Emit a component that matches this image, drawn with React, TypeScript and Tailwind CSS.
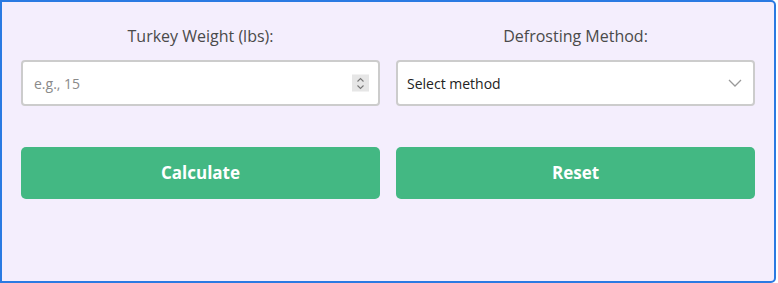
import { useState } from "react";

const font = { fontFamily: '"Open Sans", "Noto Sans", Arial, sans-serif' };

function Spinner() {
  return (
    <span className="pointer-events-none absolute right-[11px] top-1/2 flex h-[17px] w-[17px] -translate-y-1/2 flex-col items-center justify-center bg-[#e6e6e6]">
      <svg width="9" height="14" viewBox="0 0 9 14" fill="none" stroke="#777" strokeWidth="1.1">
        <path d="M1.5 5 L4.5 2 L7.5 5" />
        <path d="M1.5 9 L4.5 12 L7.5 9" />
      </svg>
    </span>
  );
}

export default function App() {
  const [weight, setWeight] = useState("");
  const [method, setMethod] = useState("");

  return (
    <div style={font} className="h-[283px] w-[776px] bg-white">
      <div className="h-full w-full rounded-r-[5px] border-2 border-[#2a7ae2] bg-[#f4eefd] px-[19px] pt-[20px]">
        <div className="grid grid-cols-2 gap-x-4">
          <div className="flex flex-col">
            <label className="mb-[10px] text-center text-[16px] leading-[28px] text-[#4a4a4a]">
              Turkey Weight (lbs):
            </label>
            <div className="relative">
              <input
                type="text"
                inputMode="decimal"
                value={weight}
                onChange={(e) => setWeight(e.target.value)}
                placeholder="e.g., 15"
                className="h-[46px] w-full rounded-[4px] border-2 border-[#cccccc] bg-white px-[11px] text-[14px] text-[#222] outline-none placeholder:text-[#8a8a8a]"
              />
              <Spinner />
            </div>
          </div>
          <div className="flex flex-col">
            <label className="mb-[10px] text-center text-[16px] leading-[28px] text-[#4a4a4a]">
              Defrosting Method:
            </label>
            <div className="relative">
              <select
                value={method}
                onChange={(e) => setMethod(e.target.value)}
                className="h-[46px] w-full appearance-none rounded-[4px] border-2 border-[#cccccc] bg-white px-[9px] text-[14px] text-[#222] outline-none"
              >
                <option value="">Select method</option>
                <option value="fridge">Refrigerator</option>
                <option value="water">Cold water</option>
              </select>
              <svg
                className="pointer-events-none absolute right-[13px] top-1/2 -translate-y-1/2"
                width="14"
                height="8"
                viewBox="0 0 14 8"
                fill="none"
                stroke="#999"
                strokeWidth="1.3"
              >
                <path d="M1 1 L7 7 L13 1" />
              </svg>
            </div>
          </div>
        </div>

        <div className="mt-[41px] grid grid-cols-2 gap-x-4">
          <button className="h-[52px] rounded-[5px] bg-[#43b883] text-[17px] font-bold text-white">
            Calculate
          </button>
          <button
            onClick={() => {
              setWeight("");
              setMethod("");
            }}
            className="h-[52px] rounded-[5px] bg-[#43b883] text-[17px] font-bold text-white"
          >
            Reset
          </button>
        </div>
      </div>
    </div>
  );
}
